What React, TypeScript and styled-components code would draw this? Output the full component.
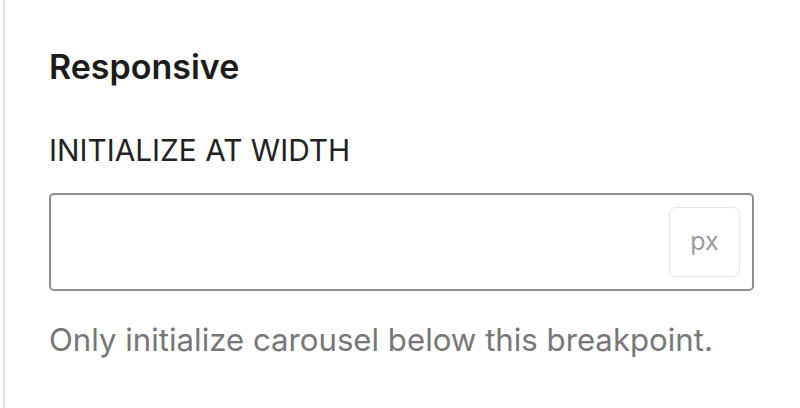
import styled, { createGlobalStyle } from "styled-components";

const GlobalStyle = createGlobalStyle`
  html, body {
    margin: 0;
    padding: 0;
    background: #ffffff;
  }
  body {
    font-family: Inter, "Liberation Sans", Arial, sans-serif;
    -webkit-font-smoothing: antialiased;
  }
`;

const Panel = styled.section`
  box-sizing: border-box;
  height: 408px;
  margin-left: 3px;
  border-left: 2px solid #e2e2e2;
  padding: 47px 46px 0 44px;
`;

const Heading = styled.h2`
  margin: 0;
  font-size: 34px;
  line-height: 40px;
  font-weight: 600;
  color: #1c1c1c;
`;

const Label = styled.label`
  display: block;
  margin-top: 45px;
  font-size: 29.8px;
  line-height: 36px;
  font-weight: 400;
  color: #222222;
`;

const Field = styled.div`
  box-sizing: border-box;
  margin-top: 25px;
  height: 98px;
  display: flex;
  align-items: center;
  justify-content: flex-end;
  padding: 0 12px;
  border: 2px solid #8e8e8e;
  border-radius: 5px;
  background: #ffffff;
`;

const Input = styled.input`
  flex: 1;
  min-width: 0;
  height: 100%;
  border: none;
  outline: none;
  background: transparent;
  font: inherit;
  font-size: 30px;
  color: #222222;
`;

const Unit = styled.span`
  box-sizing: border-box;
  width: 71px;
  height: 70px;
  display: flex;
  align-items: center;
  justify-content: center;
  border: 1.5px solid #e6e6e6;
  border-radius: 7px;
  font-size: 25px;
  color: #9a9a9a;
  padding-bottom: 3px;
`;

const Help = styled.p`
  margin: 30px 0 0;
  font-size: 31.2px;
  line-height: 38px;
  color: #777777;
`;

export default function App() {
  return (
    <>
      <GlobalStyle />
      <Panel>
        <Heading>Responsive</Heading>
        <Label htmlFor="init-width">INITIALIZE AT WIDTH</Label>
        <Field>
          <Input id="init-width" type="text" />
          <Unit>px</Unit>
        </Field>
        <Help>Only initialize carousel below this breakpoint.</Help>
      </Panel>
    </>
  );
}
